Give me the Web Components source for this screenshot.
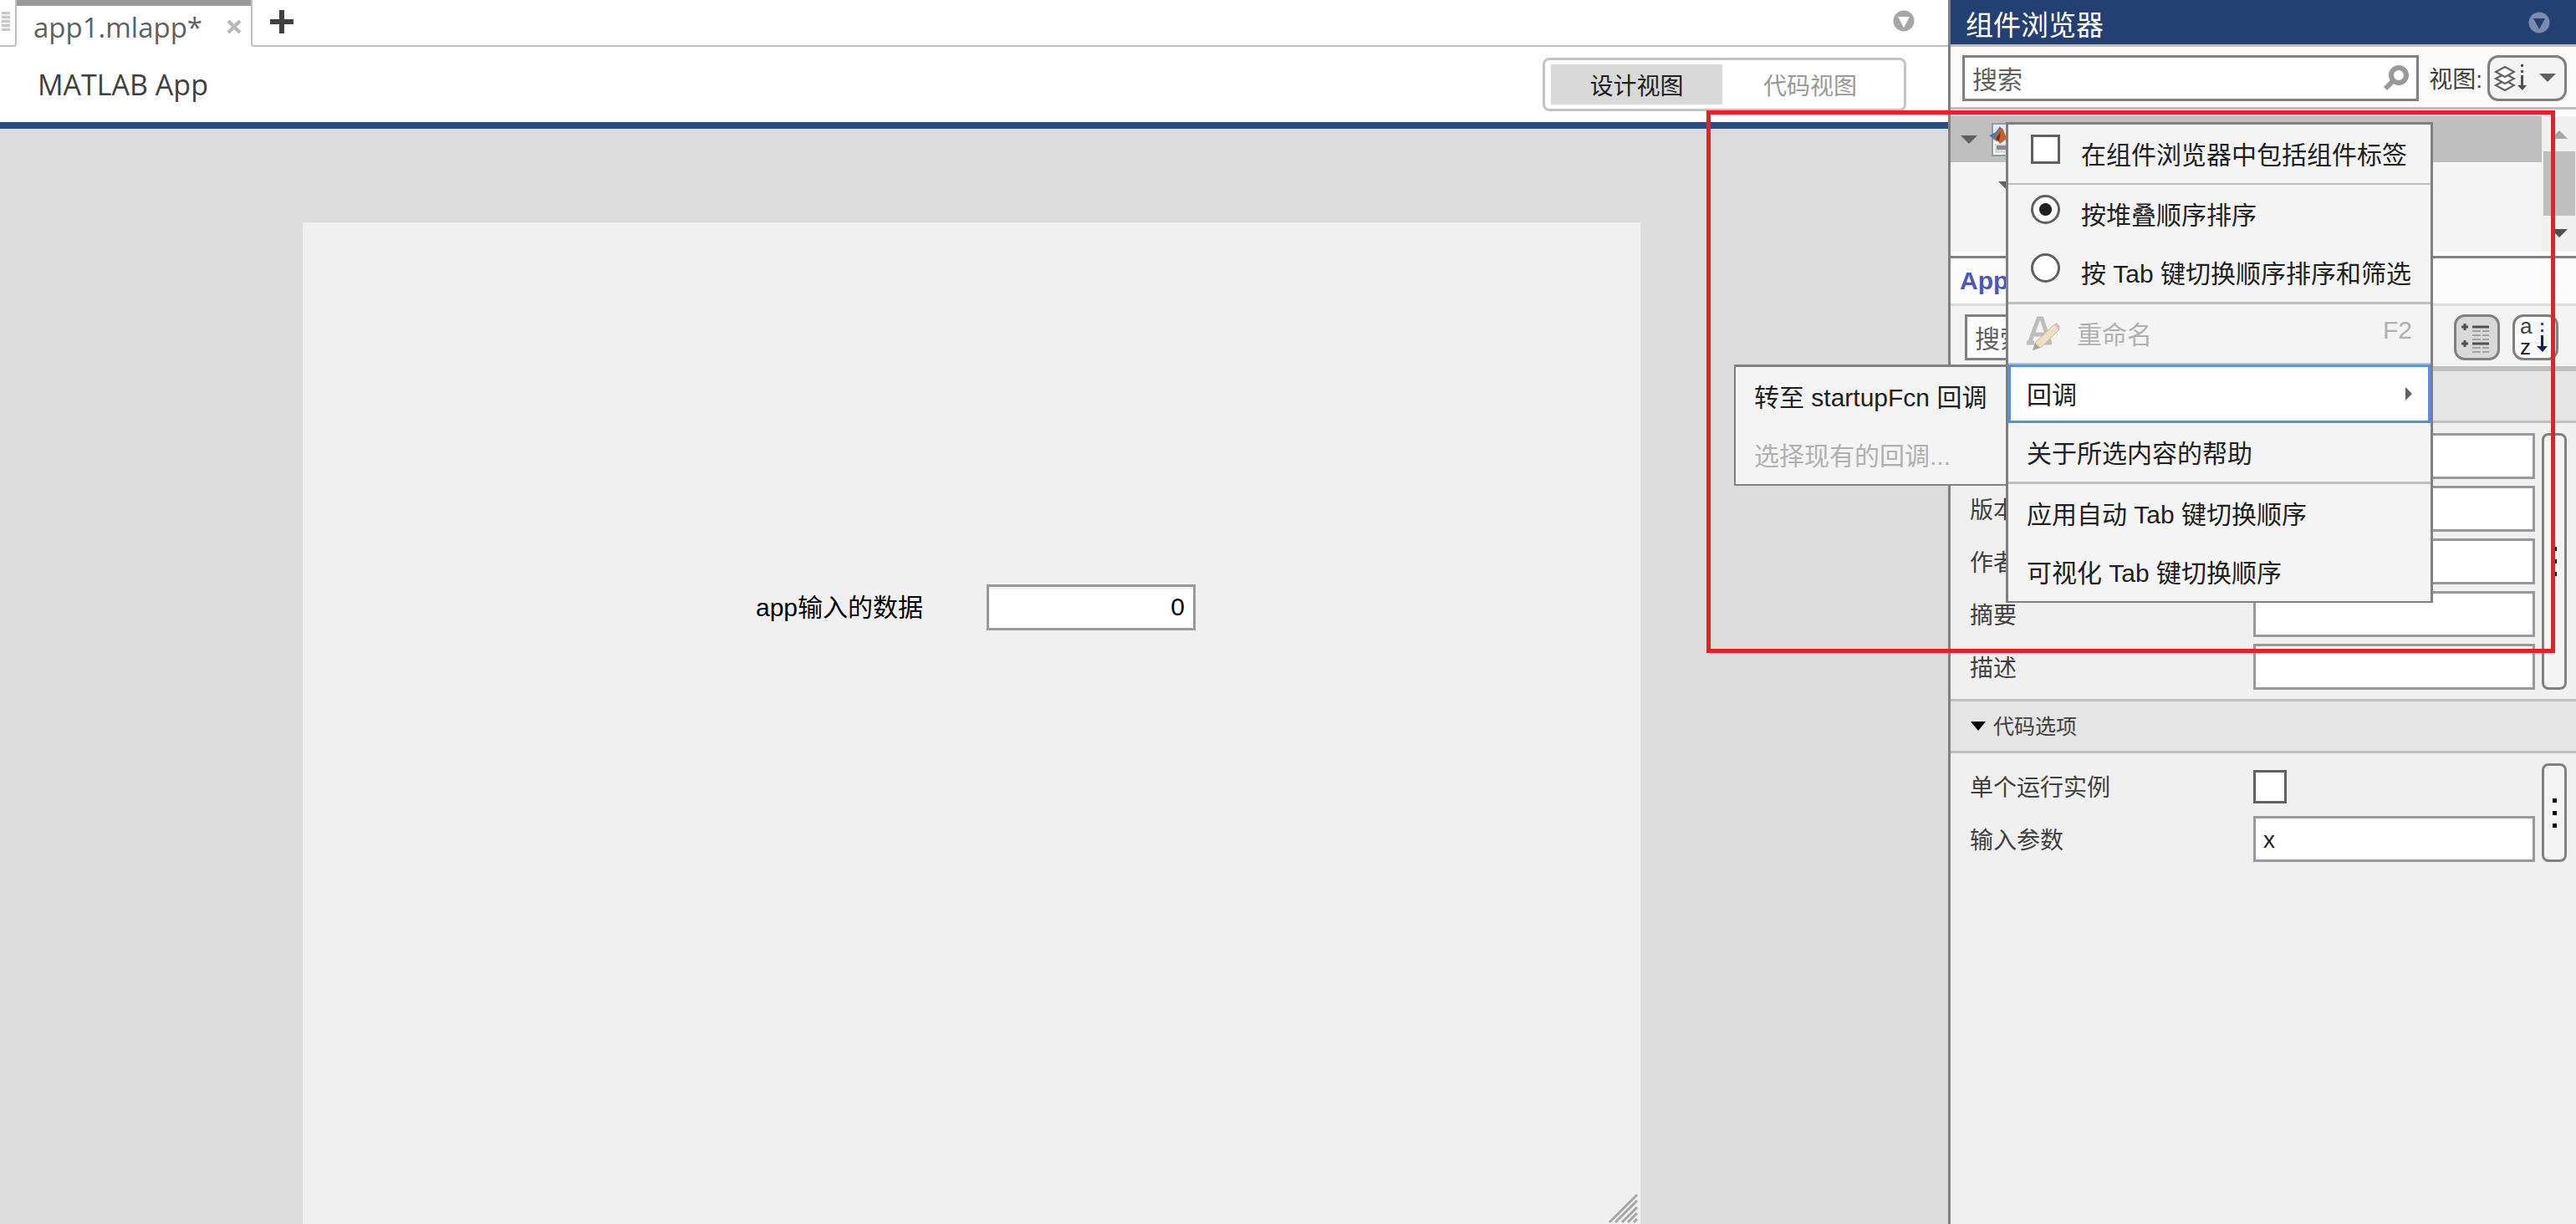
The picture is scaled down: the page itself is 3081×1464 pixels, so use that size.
<!DOCTYPE html>
<html lang="zh-CN">
<head>
<meta charset="utf-8">
<title>App Designer</title>
<style>
  html, body {
    margin: 0;
    height: 100%;
    overflow: hidden;
  }
  body {
    font-family: "Liberation Sans", "Noto Sans CJK SC", sans-serif;
    font-size: 30px;
    color: #202020;
    background: #fff;
  }
</style>
</head>
<body>
<app-designer></app-designer>

<script>
// 公共样式：每个组件的 shadow root 都会带上
const baseCss = `
  *, *::before, *::after { box-sizing: border-box; }
  button, input { font: inherit; color: inherit; margin: 0; padding: 0; border-radius: 0; }
  button { background: none; border: 0; }
  input { outline: none; min-width: 0; flex: none; }
  svg { display: block; flex: none; overflow: visible; }
`;

class BaseElement extends HTMLElement {
  connectedCallback() {
    if (this.shadowRoot) return;
    const shadow = this.attachShadow({ mode: 'open' });
    const template = document.createElement('template');
    template.innerHTML = `<style>${baseCss}${this.css()}</style>${this.html()}`;
    shadow.appendChild(template.content.cloneNode(true));
  }
  css() { return ''; }
  html() { return ''; }
}

/**
 * 圆形下拉图标
 * 颜色由 --disc 和 --mark 决定
 */
class ActionsButton extends BaseElement {
  css() {
    return `
      :host { display: block; }
      button { display: block; width: 26px; height: 26px; }
    `;
  }
  html() {
    return `
      <button aria-label="操作"><svg width="26" height="26" viewBox="0 0 26 26">
        <circle cx="13" cy="13" r="12.5" fill="var(--disc)"/>
        <path d="M6 8h14L13 21z" fill="var(--mark)"/>
      </svg></button>`;
  }
}
customElements.define('actions-button', ActionsButton);

/**
 * 文档标签栏
 */
class DocumentTabs extends BaseElement {
  css() {
    return `
      :host {
        display: flex;
        height: 56px;
        font-family: "Open Sans", "Noto Sans", sans-serif;
        font-size: 33px;
        color: #606060;
      }
      .grip {
        width: 20px;
        padding: 14px 0 0 2px;
        border-right: 2px solid #bfbfbf;
        border-bottom: 2px solid #bfbfbf;
        border-bottom-right-radius: 4px;
      }
      .grip i {
        display: block;
        width: 10px;
        height: 23px;
        background: repeating-linear-gradient(#c8c8c8 0 3px, #efefef 3px 5px);
      }
      .tab {
        display: flex;
        align-items: center;
        justify-content: space-between;
        width: 280px;
        padding: 0 11px 0 20px;
        border-top: 7px solid #9a9a9a;
        line-height: 48px;
      }
      .tab span { padding-top: 3px; }
      .rest {
        flex: 1;
        display: flex;
        align-items: flex-start;
        justify-content: space-between;
        padding: 12px 40px 0 21px;
        border-left: 2px solid #bfbfbf;
        border-bottom: 2px solid #bfbfbf;
        border-bottom-left-radius: 4px;
      }
      actions-button { --disc: #a6a6a6; --mark: #fff; }
    `;
  }
  html() {
    return `
      <div class="grip"><i></i></div>
      <div class="tab">
        <span>app1.mlapp*</span>
        <button aria-label="关闭"><svg width="18" height="18" viewBox="0 0 18 18">
          <path d="M2 2l14 14M16 2L2 16" stroke="#b8b8b8" stroke-width="4"/>
        </svg></button>
      </div>
      <div class="rest">
        <button aria-label="新建"><svg width="28" height="28" viewBox="0 0 28 28">
          <path d="M14 0v28M0 14h28" stroke="#404040" stroke-width="6"/>
        </svg></button>
        <actions-button></actions-button>
      </div>`;
  }
}
customElements.define('document-tabs', DocumentTabs);

/**
 * 标题栏，右侧为设计视图/代码视图切换
 */
class ViewBar extends BaseElement {
  css() {
    return `
      :host {
        display: flex;
        justify-content: space-between;
        align-items: center;
        height: 98px;
        padding: 0 50px 0 45px;
        border-bottom: 8px solid #2b4c88;
      }
      .name {
        font-family: "Open Sans", "Noto Sans", sans-serif;
        font-size: 34px;
        line-height: 48px;
        color: #404040;
      }
      .toggle {
        display: flex;
        width: 435px;
        height: 64px;
        padding: 5px 7px;
        border: 3px solid #c4c4c4;
        border-radius: 8px;
        font-size: 28px;
      }
      .toggle button { flex: 1; color: #999; }
      .toggle button.on { flex: none; width: 205px; background: #d9d9d9; color: #202020; }
    `;
  }
  html() {
    return `
      <div class="name">MATLAB App</div>
      <div class="toggle">
        <button class="on">设计视图</button>
        <button>代码视图</button>
      </div>`;
  }
}
customElements.define('view-bar', ViewBar);

/**
 * 设计画布，控件在 figure 中自由摆放
 */
class DesignCanvas extends BaseElement {
  css() {
    return `
      :host {
        display: block;
        flex: 1;
        min-height: 0;
        overflow: hidden;
        padding: 112px 368px 0 362px;
        background: #dcdcdc;
      }
      .figure {
        position: relative;
        height: 100%;
        background: #f0f0f0;
        color: #000;
      }
      label { position: absolute; left: 542px; top: 439px; line-height: 44px; }
      input {
        position: absolute;
        left: 818px;
        top: 433px;
        width: 250px;
        height: 55px;
        padding: 0 10px 2px;
        text-align: right;
        background: #fff;
        border: 3px solid #999;
        box-shadow: inset 0 3px #f2f2f2;
      }
      svg { position: absolute; right: 4px; bottom: 2px; }
    `;
  }
  html() {
    return `
      <div class="figure">
        <label for="value">app输入的数据</label>
        <input id="value" value="0">
        <svg width="33" height="33" viewBox="0 0 33 33">
          <path d="M0 33L33 0M7 33L33 7M15 33L33 15M22 33L33 22M29 33L33 29" stroke="#a6a6a6" stroke-width="3"/>
        </svg>
      </div>`;
  }
}
customElements.define('design-canvas', DesignCanvas);

/**
 * 搜索框
 */
class SearchField extends BaseElement {
  css() {
    return `
      :host {
        display: flex;
        align-items: center;
        height: 55px;
        padding: 0 9px 0 9px;
        background: #fff;
        border: 3px solid #808080;
      }
      input { flex: 1; width: 100%; height: 48px; padding-top: 5px; border: 0; background: none; }
      input::placeholder { color: #606060; opacity: 1; }
    `;
  }
  html() {
    return `
      <input type="text" placeholder="搜索" aria-label="搜索">
      <svg width="30" height="30" viewBox="0 0 30 30" fill="none" stroke="#999">
        <circle cx="18" cy="12" r="9" stroke-width="6"/>
        <path d="M11 19L2 28" stroke-width="6"/>
      </svg>`;
  }
}
customElements.define('search-field', SearchField);

/**
 * 组件树
 */
class ComponentTree extends BaseElement {
  css() {
    return `
      :host {
        display: flex;
        height: 178px;
        padding: 8px 0 5px;
        background: #fcfcfc;
        border-bottom: 3px solid #808080;
      }
      .rows { flex: 1; background: #f4f4f4; }
      .row { display: flex; align-items: center; gap: 14px; height: 55px; padding-left: 12px; }
      .row.on { background: #bfbfbf; }
      .row.child { padding-left: 57px; }
      .scroll {
        display: flex;
        flex-direction: column;
        align-items: center;
        width: 41px;
        padding: 17px 1px 17px 2px;
        background: #f0f0f0;
      }
      .thumb { width: 38px; height: 77px; margin: 15px 0 16px; background: #bfbfbf; }
    `;
  }
  html() {
    return `
      <div class="rows">
        <div class="row on">
          <svg width="20" height="10"><path d="M0 0h20L10 10z" fill="#606060"/></svg>
          <svg width="40" height="40" viewBox="0 0 40 40">
            <path d="M4 1h34v38H4z" fill="#e4eaf0" stroke="#999" stroke-width="2"/>
            <path d="M6 24h30v13H6z" fill="#d3dbe4" stroke="#fff" stroke-width="2"/>
            <path d="M9 27h11v5H9z" fill="#8c8c8c"/>
            <path d="M0 15l8-4 5-7 3 5-3 11-4 2z" fill="#4a78b5"/>
            <path d="M5 19c4-2 7-14 10-13s4 12 9 14c-4-2-6 2-11 5-2-3-3-5-8-6z" fill="#c7622c"/>
            <path d="M8 19l6-9-2 12z" fill="#7b2d1d"/>
          </svg>
        </div>
        <div class="row child">
          <svg width="20" height="10"><path d="M0 0h20L10 10z" fill="#606060"/></svg>
        </div>
      </div>
      <div class="scroll">
        <svg width="20" height="10"><path d="M0 10h20L10 0z" fill="#a6a6a6"/></svg>
        <div class="thumb"></div>
        <svg width="20" height="10"><path d="M0 0h20L10 10z" fill="#505050"/></svg>
      </div>`;
  }
}
customElements.define('component-tree', ComponentTree);

/**
 * 属性分组
 * attribute['heading'] 标题，省略时标题栏留空
 */
class PropertySection extends BaseElement {
  css() {
    return `
      :host { display: block; }
      header {
        display: flex;
        align-items: center;
        gap: 9px;
        height: 62px;
        padding-left: 24px;
        background: #e5e5e5;
        border-bottom: 3px solid #bfbfbf;
        font-size: 25px;
        line-height: 36px;
        color: #404040;
      }
      .body { display: flex; gap: 8px; padding: 12px 11px 11px 23px; }
      .rows { flex: 1; display: flex; flex-direction: column; gap: 8px; }
      .more {
        display: flex;
        flex-direction: column;
        align-items: center;
        justify-content: center;
        gap: 10px;
        width: 30px;
        background: #f4f4f4;
        border: 3px solid #808080;
        border-radius: 8px;
      }
      .more i { width: 5px; height: 5px; background: #000; }
    `;
  }
  html() {
    return `
      <header>
        <svg width="18" height="11"><path d="M0 0h18L9 11z" fill="#000"/></svg>
        <span>${this.getAttribute('heading') || ''}</span>
      </header>
      <div class="body">
        <div class="rows"><slot></slot></div>
        <button class="more" aria-label="更多"><i></i><i></i><i></i></button>
      </div>`;
  }
}
customElements.define('property-section', PropertySection);

/**
 * 属性行
 * attribute['label'] 名称
 * attribute['type']  text | checkbox
 */
class PropertyRow extends BaseElement {
  css() {
    return `
      :host {
        display: grid;
        grid-template-columns: 1fr 337px;
        align-items: center;
        height: 55px;
        font-size: 28px;
        color: #404040;
      }
      label { padding-bottom: 2px; }
      input[type=text] {
        width: 100%;
        height: 55px;
        padding: 2px 9px 0;
        background: #fff;
        border: 3px solid #999;
        color: #202020;
      }
      input[type=checkbox] {
        appearance: none;
        width: 40px;
        height: 40px;
        background: #fff;
        border: 3px solid #606060;
      }
    `;
  }
  html() {
    const type = this.getAttribute('type') || 'text';
    const value = this.getAttribute('value');
    return `
      <label for="field">${this.getAttribute('label')}</label>
      <input id="field" type="${type}"${value ? ` value="${value}"` : ''}>`;
  }
}
customElements.define('property-row', PropertyRow);

/**
 * 菜单项
 * attribute['type'] checkbox | radio | submenu，省略为普通命令
 */
class MenuItem extends BaseElement {
  css() {
    return `
      :host { display: block; height: 70px; white-space: nowrap; }
      :host([disabled]) { color: #b0b0b0; }
      :host([active]) { background: #fff; outline: 3px solid #5b8fdc; outline-offset: -3px; }
      label, button {
        display: flex;
        align-items: center;
        width: 100%;
        height: 70px;
        padding: 0 22px;
        text-align: left;
      }
      button:disabled { color: #b0b0b0; }
      label { padding: 0 22px 0 27px; gap: 25px; }
      .text { flex: 1; padding-bottom: 2px; }
      .key { padding-bottom: 9px; }
      input {
        appearance: none;
        width: 35px;
        height: 35px;
        margin-bottom: 12px;
        background: #fff;
        border: 3px solid #606060;
      }
      input[type=radio] { border-radius: 50%; }
      input[type=radio]:checked { background: radial-gradient(circle, #202020 7px, #fff 8px); }
      ::slotted(svg) { display: block; margin-right: 20px; }
    `;
  }
  html() {
    const type = this.getAttribute('type');
    if (type === 'checkbox' || type === 'radio') {
      const checked = this.hasAttribute('checked') ? 'checked' : '';
      const name = type === 'radio' ? 'name="order"' : '';
      return `<label><input type="${type}" ${name} ${checked}><span class="text"><slot></slot></span></label>`;
    }
    const key = this.getAttribute('key');
    return `
      <button ${this.hasAttribute('disabled') ? 'disabled' : ''}>
        <slot name="icon"></slot>
        <span class="text"><slot></slot></span>
        ${key ? `<span class="key">${key}</span>` : ''}
        ${type === 'submenu' ? '<svg width="8" height="16"><path d="M0 0v16l8-8z" fill="#606060"/></svg>' : ''}
      </button>`;
  }
}
customElements.define('menu-item', MenuItem);

/**
 * 弹出菜单，位置由使用方设置
 */
class PopupMenu extends BaseElement {
  css() {
    return `
      :host {
        display: block;
        background: #f4f4f4;
        border: 3px solid #808080;
        border-bottom-width: 2px;
      }
      ::slotted(hr) { margin: 0; border: 0; height: 2px; background: #bfbfbf; }
      ::slotted(hr.thick) { height: 3px; }
    `;
  }
  html() { return '<slot></slot>'; }
}
customElements.define('popup-menu', PopupMenu);

/**
 * 组件浏览器面板
 */
class ComponentBrowser extends BaseElement {
  css() {
    return `
      :host {
        display: block;
        width: 751px;
        background: #f0f0f0;
        border-left: 3px solid #808080;
      }
      .title {
        display: flex;
        justify-content: space-between;
        align-items: center;
        height: 56px;
        padding: 0 31px 0 18px;
        background: #243f72;
        border-bottom: 3px solid #bfbfbf;
        color: #fff;
        font-size: 33px;
      }
      .title span { padding-top: 2px; }
      actions-button { --disc: #7a8bad; --mark: #243f72; }
      search-field { flex: 1; }
      .find {
        display: flex;
        align-items: center;
        height: 75px;
        padding: 2px 11px 0 14px;
        background: #fafafa;
        border-bottom: 3px solid #bfbfbf;
      }
      .find .view { margin: 0 6px 0 12px; font-size: 28px; color: #404040; }
      .drop {
        display: flex;
        align-items: center;
        justify-content: space-between;
        width: 95px;
        height: 55px;
        padding: 0 10px 0 5px;
        background: #f4f4f4;
        border: 3px solid #808080;
        border-radius: 13px;
      }
      .target {
        height: 57px;
        padding-left: 11px;
        background: #fcfcfc;
        border-bottom: 3px solid #dcdcdc;
        color: #4b57bb;
        font-weight: bold;
        line-height: 54px;
      }
      .filter {
        display: flex;
        align-items: center;
        gap: 15px;
        height: 78px;
        padding: 2px 21px 0 17px;
        background: #f3f3f3;
        border-bottom: 6px solid #bfbfbf;
      }
      .filter search-field { margin-right: 20px; }
      .icon {
        width: 55px;
        height: 55px;
        background: #fafafa;
        border: 3px solid #808080;
        border-radius: 13px;
      }
      .icon.on { background: #d9d9d9; }
      .code { border-top: 3px solid #bfbfbf; }
    `;
  }
  html() {
    return `
      <div class="title"><span>组件浏览器</span><actions-button></actions-button></div>
      <div class="find">
        <search-field></search-field>
        <span class="view">视图:</span>
        <button class="drop" aria-label="视图">
          <svg width="40" height="34" viewBox="0 0 40 34">
            <g fill="#fff" stroke="#606060" stroke-width="2">
              <path d="M2 26l11-6 11 6-11 6z"/>
              <path d="M2 18l11-6 11 6-11 6z"/>
              <path d="M2 10l11-6 11 6-11 6z"/>
            </g>
            <path d="M32 1h3v3h-3zM32 8h3v3h-3zM32 14h3v12h4l-5 6-6-6h4z" fill="#505050"/>
          </svg>
          <svg width="20" height="10"><path d="M0 0h20L10 10z" fill="#606060"/></svg>
        </button>
      </div>
      <component-tree></component-tree>
      <div class="target">App</div>
      <div class="filter">
        <search-field></search-field>
        <button class="icon on" aria-label="按类别">
          <svg width="49" height="49" viewBox="0 0 49 49">
            <path d="M6 12h8M10 8v8M6 32h8M10 28v8" stroke="#505050" stroke-width="3"/>
            <path d="M19 12h20M19 32h20" stroke="#505050" stroke-width="3"/>
            <path d="M19 17h10m2 0h8M19 22h10m2 0h8M19 27h10m2 0h8M19 37h10m2 0h8M19 42h10m2 0h8" stroke="#a3a3a3" stroke-width="2"/>
          </svg>
        </button>
        <button class="icon" aria-label="按字母">
          <svg width="49" height="49" viewBox="0 0 49 49">
            <text x="6" y="20" font-size="26" fill="#404040">a</text>
            <text x="6" y="45" font-size="26" fill="#202020">z</text>
            <path d="M31 7h3v3h-3zM31 15h3v3h-3z" fill="#2b4c88"/>
            <path d="M31 22h3v13h5l-6 7-7-7h5z" fill="#14264d"/>
          </svg>
        </button>
      </div>
      <property-section>
        <property-row label="名称"></property-row>
        <property-row label="版本"></property-row>
        <property-row label="作者"></property-row>
        <property-row label="摘要"></property-row>
        <property-row label="描述"></property-row>
      </property-section>
      <property-section class="code" heading="代码选项">
        <property-row label="单个运行实例" type="checkbox"></property-row>
        <property-row label="输入参数" value="x"></property-row>
      </property-section>`;
  }
}
customElements.define('component-browser', ComponentBrowser);

/**
 * 主窗口
 */
class AppDesigner extends BaseElement {
  css() {
    return `
      :host { display: flex; position: relative; height: 100vh; overflow: hidden; }
      main { flex: 1; min-width: 0; display: flex; flex-direction: column; }
      .context { position: absolute; top: 146px; right: 171px; width: 511px; }
      .callbacks { position: absolute; top: 436px; right: 679px; width: 328px; border-left-width: 2px; }
      .marker {
        position: absolute;
        top: 132px;
        right: 25px;
        width: 1015px;
        height: 649px;
        border: 5px solid #ee1c24;
        pointer-events: none;
      }
    `;
  }
  html() {
    return `
      <main>
        <document-tabs></document-tabs>
        <view-bar></view-bar>
        <design-canvas></design-canvas>
      </main>
      <component-browser></component-browser>

      <popup-menu class="callbacks">
        <menu-item>转至 startupFcn 回调</menu-item>
        <menu-item disabled>选择现有的回调...</menu-item>
      </popup-menu>
      <popup-menu class="context">
        <menu-item type="checkbox">在组件浏览器中包括组件标签</menu-item>
        <hr>
        <menu-item type="radio" checked>按堆叠顺序排序</menu-item>
        <menu-item type="radio">按 Tab 键切换顺序排序和筛选</menu-item>
        <hr class="thick">
        <menu-item disabled key="F2">
          <svg slot="icon" width="40" height="40" viewBox="0 0 40 40">
            <path d="M3 32L14 2h4l10 30M8 21h15M0 31h9M21 31h9" fill="none" stroke="#bdbdbd" stroke-width="5"/>
            <path d="M8 39l3-9L33 9l6 6-21 21z" fill="#efe0c4" stroke="#c9b99c"/>
            <path d="M33 9l3-2 4 5-2 4z" fill="#e3b5cf"/>
            <path d="M7 40l3-9 6 6z" fill="#a6a6a6"/>
          </svg>重命名</menu-item>
        <hr>
        <menu-item type="submenu" active>回调</menu-item>
        <menu-item>关于所选内容的帮助</menu-item>
        <hr class="thick">
        <menu-item>应用自动 Tab 键切换顺序</menu-item>
        <menu-item>可视化 Tab 键切换顺序</menu-item>
      </popup-menu>
      <div class="marker"></div>`;
  }
}
customElements.define('app-designer', AppDesigner);
</script>
</body>
</html>
